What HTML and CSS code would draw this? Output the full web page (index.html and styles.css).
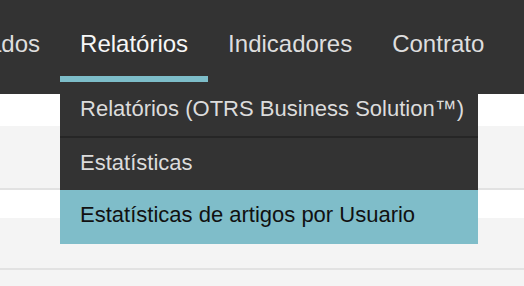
FILE: index.html
```html
<!DOCTYPE html>
<html lang="pt">
<head>
  <meta charset="UTF-8">
  <title>Relatórios</title>
  <link rel="stylesheet" href="styles.css">
</head>
<body>
  <div class="main-header">
    <ul class="main-nav">
      <li class="main-nav-item"><a href="#">Chamados</a></li>
      <li class="main-nav-item active">
        <a href="#">Relatórios</a>
        <ul class="main-nav-sub">
          <li class="main-nav-sub-item"><a href="#">Relatórios (OTRS Business Solution™)</a></li>
          <li class="main-nav-sub-item"><a href="#">Estatísticas</a></li>
          <li class="main-nav-sub-item hover"><a href="#">Estatísticas de artigos por Usuario</a></li>
        </ul>
      </li>
      <li class="main-nav-item"><a href="#">Indicadores</a></li>
      <li class="main-nav-item"><a href="#">Contrato</a></li>
    </ul>
  </div>

  <div class="content-rows">
    <div class="content-row row-white row-a"></div>
    <div class="content-row row-grey row-b"></div>
    <div class="content-row row-white row-c"></div>
    <div class="content-row row-grey row-d"></div>
  </div>
</body>
</html>
```

FILE: styles.css
```css
html, body {
  margin: 0;
  padding: 0;
  height: 100%;
  overflow: hidden;
}
body {
  font-family: "Liberation Sans", Arial, Helvetica, sans-serif;
  background: #f4f4f4;
}
a {
  color: inherit;
  text-decoration: none;
}
ul {
  list-style: none;
  margin: 0;
  padding: 0;
}

.main-header {
  height: 94px;
  background: #333333;
  position: relative;
  z-index: 10;
}
.main-nav {
  display: flex;
  align-items: flex-start;
  margin-left: -96px;
}
.main-nav-item {
  position: relative;
  padding: 30px 20px 18px;
  font-size: 24px;
  line-height: 28px;
  color: #dedede;
  white-space: nowrap;
  border-bottom: 6px solid transparent;
}
.main-nav-item.active {
  color: #f7f7f7;
  border-bottom-color: #7dbdc9;
}

/* dropdown under the active tab */
.main-nav-sub {
  position: absolute;
  top: calc(100% + 8px);
  left: 0;
  width: 418px;
  background: #333333;
}
.main-nav-sub-item {
  padding: 12px 20px 14px;
  font-size: 22px;
  line-height: 26px;
  color: #dcdcdc;
}
.main-nav-sub-item:first-child {
  border-bottom: 2px solid #262626;
}
.main-nav-sub-item.hover {
  padding-bottom: 16px;
  background: #7fbdc9;
  color: #111111;
}

.content-row {
  box-sizing: border-box;
}
.row-white {
  background: #ffffff;
}
.row-grey {
  background: #f4f4f4;
}
.row-a { height: 32px; }
.row-b { height: 64px; border-bottom: 2px solid #e2e2e2; }
.row-c { height: 28px; }
.row-d { height: 52px; border-bottom: 2px solid #e2e2e2; }
```
